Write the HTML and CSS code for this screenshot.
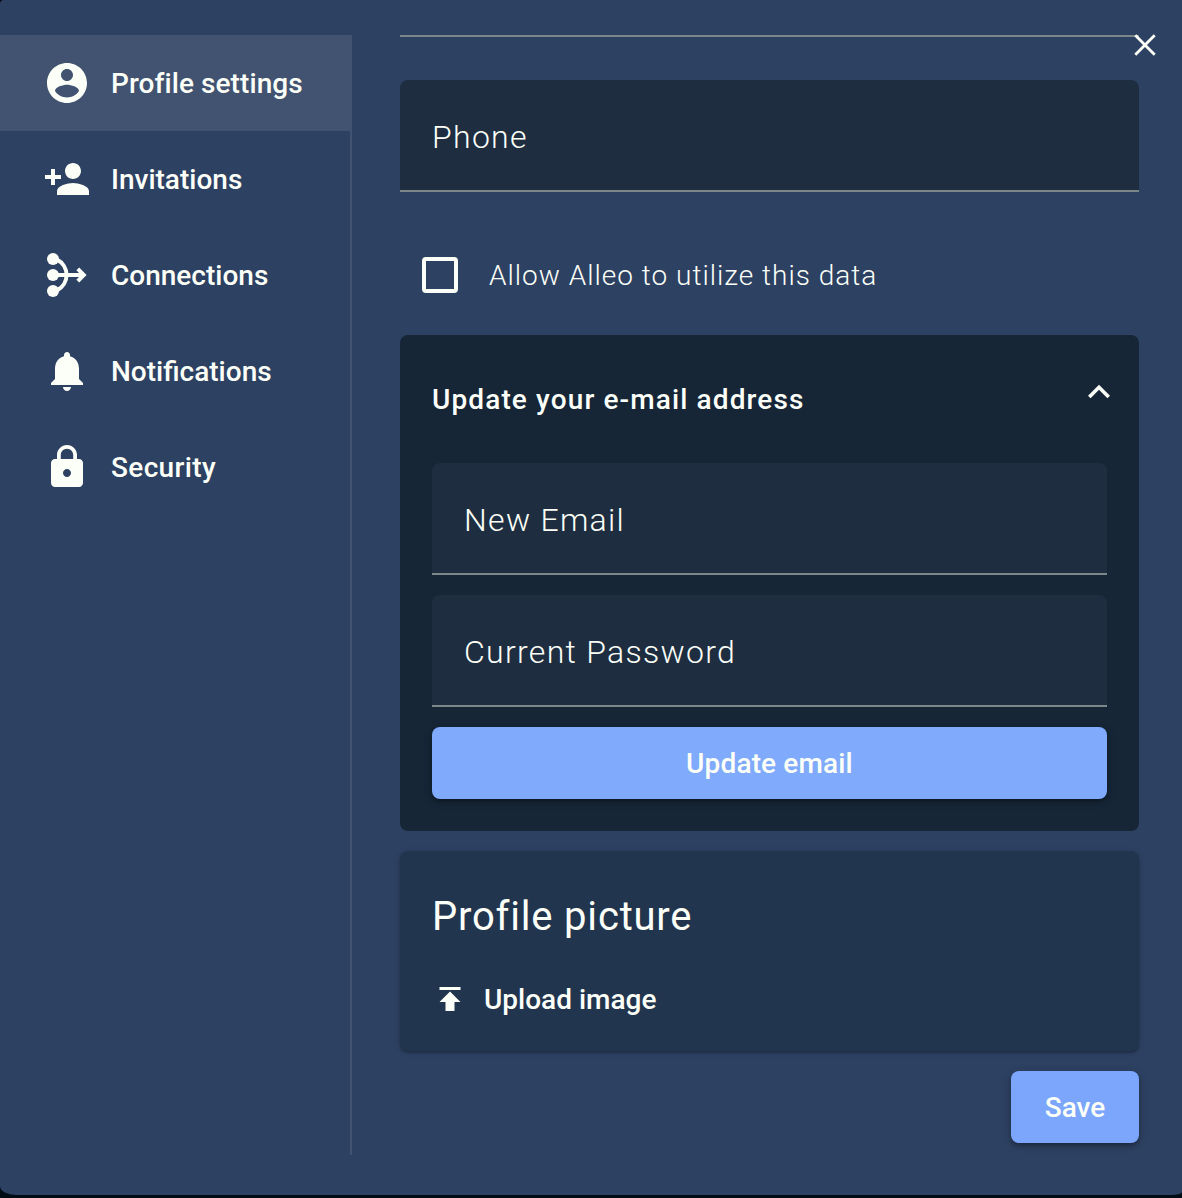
FILE: index.html
```html
<!DOCTYPE html>
<html lang="en">
<head>
  <meta charset="UTF-8">
  <meta name="viewport" content="width=device-width, initial-scale=1.0">
  <title>Profile settings</title>
  <link rel="stylesheet" href="styles.css">
</head>
<body>
  <div class="dialog">
    <!-- Sidebar -->
    <nav class="sidebar">
      <a class="nav-item active">
        <svg class="nav-icon" viewBox="0 0 24 24"><path d="M12 2C6.48 2 2 6.48 2 12s4.48 10 10 10 10-4.48 10-10S17.52 2 12 2zm0 3c1.66 0 3 1.34 3 3s-1.34 3-3 3-3-1.34-3-3 1.34-3 3-3zm0 14.2c-2.5 0-4.71-1.28-6-3.22.03-1.99 4-3.08 6-3.08 1.99 0 5.97 1.09 6 3.08-1.29 1.94-3.5 3.22-6 3.22z"/></svg>
        <span class="nav-text profile">Profile settings</span>
      </a>
      <a class="nav-item">
        <svg class="nav-icon" viewBox="0 0 24 24"><path d="M15 12c2.21 0 4-1.79 4-4s-1.79-4-4-4-4 1.79-4 4 1.79 4 4 4zm-9-2V7H4v3H1v2h3v3h2v-3h3v-2H6zm9 4c-2.67 0-8 1.34-8 4v2h16v-2c0-2.66-5.33-4-8-4z"/></svg>
        <span class="nav-text">Invitations</span>
      </a>
      <a class="nav-item">
        <svg class="nav-icon" viewBox="0 0 24 24">
          <circle cx="5" cy="4" r="3"/>
          <circle cx="5" cy="12" r="3"/>
          <circle cx="5" cy="20" r="3"/>
          <path class="line" d="M7 4.3A8.6 8.6 0 0 1 7 19.7M5 12H20.3M17.4 8.9L20.4 12L17.4 15.1"/>
        </svg>
        <span class="nav-text">Connections</span>
      </a>
      <a class="nav-item">
        <svg class="nav-icon" viewBox="0 0 24 24"><path d="M12 22c1.1 0 2-.9 2-2h-4c0 1.1.89 2 2 2zm6-6v-5c0-3.07-1.64-5.64-4.5-6.32V4c0-.83-.67-1.5-1.5-1.5s-1.5.67-1.5 1.5v.68C7.63 5.36 6 7.92 6 11v5l-2 2v1h16v-1l-2-2z"/></svg>
        <span class="nav-text">Notifications</span>
      </a>
      <a class="nav-item">
        <svg class="nav-icon" viewBox="0 0 24 24"><path d="M18 8h-1V6c0-2.76-2.24-5-5-5S7 3.24 7 6v2H6c-1.1 0-2 .9-2 2v10c0 1.1.9 2 2 2h12c1.1 0 2-.9 2-2V10c0-1.1-.9-2-2-2zm-6 9c-1.1 0-2-.9-2-2s.9-2 2-2 2 .9 2 2-.9 2-2 2zm3.1-9H8.9V6c0-1.71 1.39-3.1 3.1-3.1 1.71 0 3.1 1.39 3.1 3.1v2z"/></svg>
        <span class="nav-text security">Security</span>
      </a>
    </nav>

    <!-- Settings form -->
    <main class="content">
      <div class="field-end"></div>
      <div class="field"><span>Phone</span></div>

      <label class="checkbox-row">
        <span class="checkbox"></span>
        <span>Allow Alleo to utilize this data</span>
      </label>

      <!-- Update email -->
      <section class="email-panel">
        <div class="panel-header">
          <h2>Update your e-mail address</h2>
          <svg class="chevron" viewBox="0 0 24 24"><path d="M12 8l-6 6 1.41 1.41L12 10.83l4.59 4.58L18 14z"/></svg>
        </div>
        <div class="field"><span>New Email</span></div>
        <div class="field"><span>Current Password</span></div>
        <button class="btn btn-update">Update email</button>
      </section>

      <!-- Profile picture -->
      <section class="picture-card">
        <h1>Profile picture</h1>
        <div class="upload">
          <svg class="upload-icon" viewBox="0 0 24 24"><path d="M5 4v2h14V4H5zm0 10h4v6h6v-6h4l-7-7-7 7z"/></svg>
          <span>Upload image</span>
        </div>
      </section>

      <button class="btn btn-save">Save</button>
    </main>

    <svg class="close" viewBox="0 0 22 22"><path d="M1.3 1.3L20.7 20.7M20.7 1.3L1.3 20.7"/></svg>
  </div>
</body>
</html>
```
FILE: styles.css
```css
* {
  box-sizing: border-box;
}

body {
  margin: 0;
  height: 1198px;
  overflow: hidden;
  background-color: #020c14;
  color: #fcfff8;
  font-family: Roboto, sans-serif;
  font-size: 28px;
}

h1, h2 {
  margin: 0;
}

svg {
  display: block;
  fill: #fcfff8;
}

.dialog {
  position: relative;
  display: flex;
  height: 1195px;
  padding-top: 35px;
  background-color: #2d4162;
  border-radius: 4px 0 10px 16px / 4px 0 3px 9px;
}

/* Sidebar */
.sidebar {
  width: 352px;
  height: 1120px;
  border-right: 2px solid #415370;
}

.nav-item {
  display: flex;
  align-items: center;
  height: 96px;
  padding-left: 43px;
  gap: 20px;
  font-weight: 500;
}

.nav-item.active {
  background-color: #415370;
}

.nav-icon {
  width: 48px;
  height: 48px;
}

.nav-icon .line {
  fill: none;
  stroke: #fcfff8;
  stroke-width: 2;
}

.nav-text.profile {
  letter-spacing: 0.08px;
}

.nav-text.security {
  letter-spacing: 0.35px;
}

/* Content */
.content {
  width: 739px;
  margin-left: 48px;
}

.field-end {
  height: 2px;
  margin-bottom: 43px;
  background-color: #7c8789;
}

.field {
  display: flex;
  align-items: center;
  height: 112px;
  padding: 4px 32px 0;
  background-color: #1e2e40;
  border-bottom: 2px solid #7c8789;
  border-radius: 8px 8px 0 0;
  font-size: 32px;
  font-weight: 300;
  letter-spacing: 1.3px;
}

.checkbox-row {
  display: flex;
  align-items: center;
  height: 36px;
  margin: 65px 0 42px 22px;
  gap: 31px;
  font-weight: 300;
  letter-spacing: 1px;
}

.checkbox {
  width: 36px;
  height: 36px;
  border: 4px solid #fcfff8;
  border-radius: 4px;
}

.email-panel {
  height: 496px;
  padding: 0 32px;
  background-color: #162637;
  border-radius: 8px;
}

.panel-header {
  display: flex;
  justify-content: space-between;
  height: 128px;
  padding-top: 35px;
}

.panel-header h2 {
  padding-top: 13px;
  font-size: 28px;
  font-weight: 500;
  letter-spacing: 1.12px;
}

.chevron {
  width: 44px;
  height: 44px;
  margin-right: -14px;
}

.email-panel .field {
  margin-bottom: 20px;
}

.btn {
  display: block;
  height: 72px;
  padding: 0;
  border: none;
  border-radius: 8px;
  background-color: #7ba6fb;
  color: #fcfff8;
  font-family: inherit;
  font-size: 28px;
  font-weight: 500;
  box-shadow: 0 3px 5px -1px rgba(0, 0, 0, 0.3), 0 2px 10px rgba(0, 0, 0, 0.2);
}

.btn-update {
  width: 100%;
  background-color: #80aafb;
  letter-spacing: 0.15px;
}

.picture-card {
  height: 200px;
  margin: 20px 0;
  padding: 42px 32px 0;
  background-color: #22354e;
  border-radius: 8px;
  box-shadow: 0 2px 2px rgba(0, 0, 0, 0.2), 0 1px 6px rgba(0, 0, 0, 0.15);
}

.picture-card h1 {
  font-size: 40px;
  font-weight: 400;
  line-height: 48px;
  letter-spacing: 0.8px;
}

.upload {
  display: flex;
  align-items: center;
  height: 36px;
  margin-top: 40px;
  gap: 16px;
  font-weight: 500;
}

.upload-icon {
  width: 36px;
  height: 36px;
}

.btn-save {
  width: 128px;
  margin-left: auto;
}

.close {
  position: absolute;
  top: 34px;
  right: 26px;
  width: 22px;
  height: 22px;
  stroke: #fcfff8;
  stroke-width: 2.8;
}
```
